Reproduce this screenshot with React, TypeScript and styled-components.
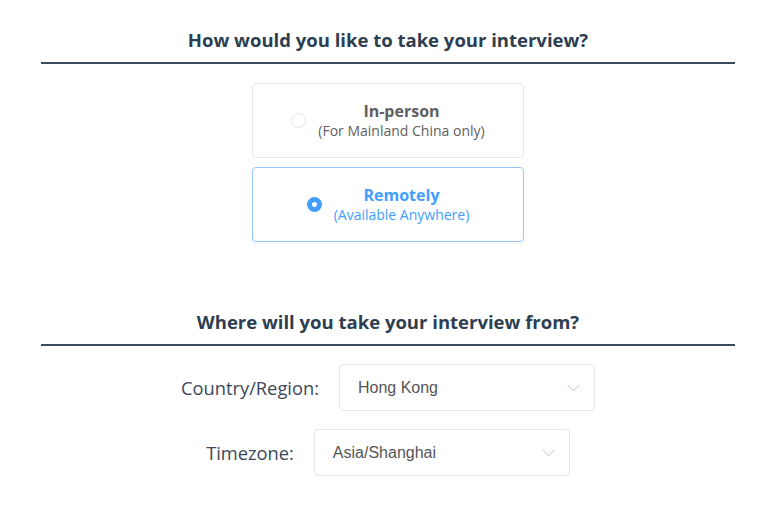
import { useState } from 'react';
import styled, { createGlobalStyle } from 'styled-components';

const GlobalStyle = createGlobalStyle`
  html, body {
    margin: 0;
    padding: 0;
    background: #ffffff;
  }
  body {
    font-family: "Open Sans", "Noto Sans", sans-serif;
    color: #2c3e50;
  }
`;

const Page = styled.div`
  margin: 0 33px 0 41px;
  padding-top: 27px;
`;

const Section = styled.section<{ $gap?: number }>`
  margin-top: ${p => p.$gap ?? 0}px;
`;

const Heading = styled.h2`
  margin: 0;
  padding-bottom: 10px;
  border-bottom: 2px solid #3b4a5a;
  font-size: 18.5px;
  line-height: 25px;
  font-weight: 700;
  text-align: center;
  color: #2c3e50;
`;

const Options = styled.div`
  display: flex;
  flex-direction: column;
  align-items: center;
  gap: 9px;
  margin-top: 19px;
`;

const Card = styled.button<{ $active: boolean }>`
  appearance: none;
  outline: none;
  display: flex;
  align-items: center;
  justify-content: center;
  gap: 12px;
  width: 272px;
  height: 75px;
  padding: 0;
  background: #fff;
  border: 1px solid ${p => (p.$active ? '#94c6f9' : '#e6e6e6')};
  border-radius: 4px;
  cursor: pointer;
  font-family: inherit;
`;

const Radio = styled.span<{ $active: boolean }>`
  box-sizing: border-box;
  width: 15px;
  height: 15px;
  border-radius: 50%;
  flex: none;
  border: ${p => (p.$active ? '5px solid #409eff' : '1px solid #e2e2e2')};
  background: #fff;
`;

const Labels = styled.span<{ $active: boolean }>`
  display: flex;
  flex-direction: column;
  align-items: center;
  color: ${p => (p.$active ? '#409eff' : '#5f5f5f')};
`;

const Title = styled.span`
  font-size: 16px;
  line-height: 20px;
  font-weight: 700;
`;

const Sub = styled.span`
  font-size: 14px;
  line-height: 19px;
`;

const Fields = styled.div`
  display: flex;
  flex-direction: column;
  align-items: center;
  gap: 18px;
  margin-top: 18px;
`;

const Row = styled.div`
  display: flex;
  align-items: center;
  gap: 20px;
`;

const Label = styled.label`
  font-size: 18.3px;
  color: #3b4859;
`;

const Select = styled.div`
  box-sizing: border-box;
  display: flex;
  align-items: center;
  justify-content: space-between;
  width: 256px;
  height: 47px;
  padding: 0 14px 0 18px;
  border: 1px solid #e6e6ea;
  border-radius: 4px;
  font-family: "Liberation Sans", Arial, sans-serif;
  font-size: 16px;
  color: #555;
`;

const Chevron = () => (
  <svg width="13" height="8" viewBox="0 0 13 8" fill="none">
    <path d="M0.5 0.8 L6.5 6.8 L12.5 0.8" stroke="#c4c4c8" strokeWidth="1" />
  </svg>
);

const modes = [
  { id: 'inperson', title: 'In-person', sub: '(For Mainland China only)' },
  { id: 'remote', title: 'Remotely', sub: '(Available Anywhere)' },
];

export default function App() {
  const [mode, setMode] = useState('remote');
  return (
    <>
      <GlobalStyle />
      <Page>
        <Section>
          <Heading>How would you like to take your interview?</Heading>
          <Options>
            {modes.map(m => (
              <Card key={m.id} $active={mode === m.id} onClick={() => setMode(m.id)}>
                <Radio $active={mode === m.id} />
                <Labels $active={mode === m.id}>
                  <Title>{m.title}</Title>
                  <Sub>{m.sub}</Sub>
                </Labels>
              </Card>
            ))}
          </Options>
        </Section>
        <Section $gap={67}>
          <Heading>Where will you take your interview from?</Heading>
          <Fields>
            <Row>
              <Label>Country/Region:</Label>
              <Select>
                Hong Kong
                <Chevron />
              </Select>
            </Row>
            <Row>
              <Label>Timezone:</Label>
              <Select>
                Asia/Shanghai
                <Chevron />
              </Select>
            </Row>
          </Fields>
        </Section>
      </Page>
    </>
  );
}
